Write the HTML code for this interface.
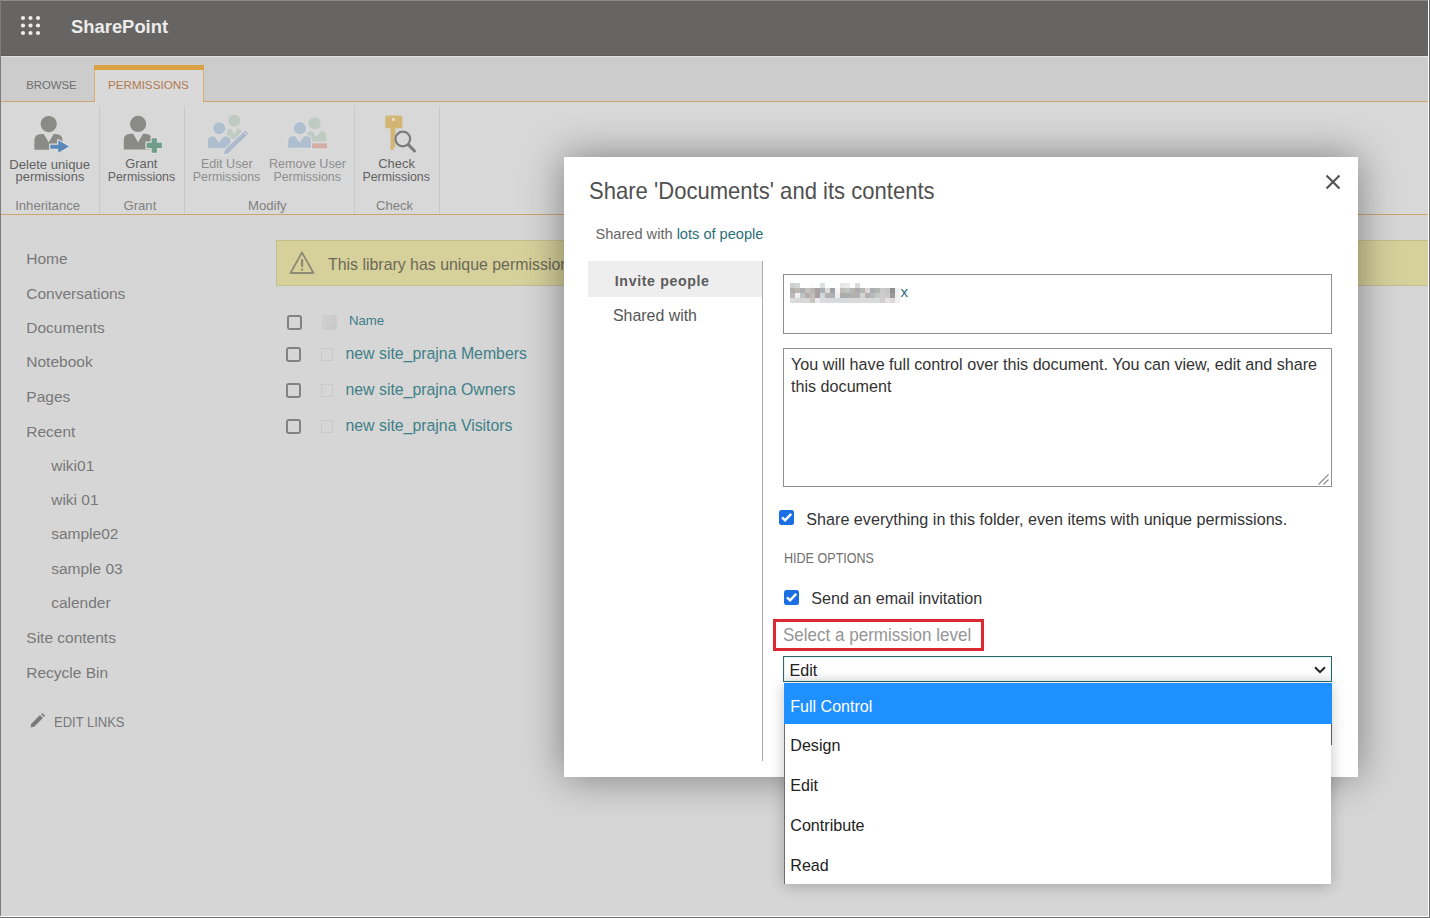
<!DOCTYPE html>
<html><head><meta charset="utf-8"><title>SharePoint</title>
<style>
html,body{margin:0;padding:0;width:1430px;height:918px;overflow:hidden;background:#d6d6d6;font-family:"Liberation Sans", sans-serif;}
.t{position:absolute;white-space:nowrap;font-family:"Liberation Sans", sans-serif;}
svg{overflow:visible}
</style></head><body>
<div style="position:absolute;left:0px;top:0px;width:1430px;height:56px;background:#666564"></div><svg style="position:absolute;left:0;top:0" width="60" height="56"><circle cx="23.0" cy="18.0" r="2.1" fill="#ededed"/><circle cx="23.0" cy="25.5" r="2.1" fill="#ededed"/><circle cx="23.0" cy="33.0" r="2.1" fill="#ededed"/><circle cx="30.5" cy="18.0" r="2.1" fill="#ededed"/><circle cx="30.5" cy="25.5" r="2.1" fill="#ededed"/><circle cx="30.5" cy="33.0" r="2.1" fill="#ededed"/><circle cx="38.0" cy="18.0" r="2.1" fill="#ededed"/><circle cx="38.0" cy="25.5" r="2.1" fill="#ededed"/><circle cx="38.0" cy="33.0" r="2.1" fill="#ededed"/></svg><div class="t" style="left:71px;top:18.22px;font-size:18.4px;line-height:18.4px;color:#ececec;font-weight:700;">SharePoint</div><div style="position:absolute;left:0px;top:55px;width:1430px;height:1px;background:#5e5d5c"></div><div style="position:absolute;left:0px;top:56px;width:1430px;height:1px;background:#e2e2e2"></div><div style="position:absolute;left:0px;top:57px;width:1430px;height:44px;background:#cccccc"></div><div style="position:absolute;left:0px;top:101px;width:1430px;height:1px;background:#cda56d"></div><div style="position:absolute;left:94px;top:65px;width:110px;height:37px;background:#d9d9d9;border-left:1px solid #dcae6a;border-right:1px solid #dcae6a;box-sizing:border-box"></div><div style="position:absolute;left:94px;top:65px;width:110px;height:5px;background:#d9a044"></div><div class="t" style="left:26.2px;top:79.89px;font-size:11.35px;line-height:11.35px;color:#6e6e6e;font-weight:400;">BROWSE</div><div class="t" style="left:108px;top:79.14px;font-size:11.65px;line-height:11.65px;color:#b27a52;font-weight:400;">PERMISSIONS</div><div style="position:absolute;left:0px;top:102px;width:1430px;height:112px;background:#d8d8d8"></div><div style="position:absolute;left:0px;top:214px;width:1430px;height:1px;background:#cda56d"></div><div style="position:absolute;left:99px;top:106px;width:1px;height:108px;background:#c9c9c9"></div><div style="position:absolute;left:184px;top:106px;width:1px;height:108px;background:#c9c9c9"></div><div style="position:absolute;left:354px;top:106px;width:1px;height:108px;background:#c9c9c9"></div><div style="position:absolute;left:439px;top:106px;width:1px;height:108px;background:#c9c9c9"></div><div class="t" style="left:-100.3px;width:300px;text-align:center;top:157.91px;font-size:13.1px;line-height:13.1px;color:#626262">Delete unique</div><div class="t" style="left:-100px;width:300px;text-align:center;top:170.58px;font-size:12.9px;line-height:12.9px;color:#626262">permissions</div><div class="t" style="left:-8.699999999999989px;width:300px;text-align:center;top:158.08px;font-size:12.9px;line-height:12.9px;color:#626262">Grant</div><div class="t" style="left:-8.599999999999994px;width:300px;text-align:center;top:171.00px;font-size:12.4px;line-height:12.4px;color:#626262">Permissions</div><div class="t" style="left:76.80000000000001px;width:300px;text-align:center;top:158.33px;font-size:12.6px;line-height:12.6px;color:#8e8e8e">Edit User</div><div class="t" style="left:76.5px;width:300px;text-align:center;top:171.00px;font-size:12.4px;line-height:12.4px;color:#8e8e8e">Permissions</div><div class="t" style="left:157.39999999999998px;width:300px;text-align:center;top:158.33px;font-size:12.6px;line-height:12.6px;color:#8e8e8e">Remove User</div><div class="t" style="left:157.2px;width:300px;text-align:center;top:171.00px;font-size:12.4px;line-height:12.4px;color:#8e8e8e">Permissions</div><div class="t" style="left:246.60000000000002px;width:300px;text-align:center;top:158.08px;font-size:12.9px;line-height:12.9px;color:#626262">Check</div><div class="t" style="left:246.2px;width:300px;text-align:center;top:171.00px;font-size:12.4px;line-height:12.4px;color:#626262">Permissions</div><div class="t" style="left:-102.4px;width:300px;text-align:center;top:198.61px;font-size:13.1px;line-height:13.1px;color:#808080">Inheritance</div><div class="t" style="left:-10.099999999999994px;width:300px;text-align:center;top:198.61px;font-size:13.1px;line-height:13.1px;color:#808080">Grant</div><div class="t" style="left:117.30000000000001px;width:300px;text-align:center;top:198.61px;font-size:13.1px;line-height:13.1px;color:#808080">Modify</div><div class="t" style="left:244.60000000000002px;width:300px;text-align:center;top:198.61px;font-size:13.1px;line-height:13.1px;color:#808080">Check</div><svg style="position:absolute;left:0;top:102px" width="440" height="112" viewBox="0 102 440 112"><circle cx="48.7" cy="124.1" r="8.1" fill="#8a8a86"/><path d="M34.400000000000006 149.7 L34.400000000000006 140.0 Q34.400000000000006 134.0 41.400000000000006 134.0 L43.7 134.0 L48.7 142.5 L53.7 134.0 L55.400000000000006 134.0 Q62.400000000000006 134.0 62.400000000000006 140.0 L62.400000000000006 149.7 Z" fill="#8a8a86"/><path d="M50.3 144.8 L58.3 144.8 L58.3 140.3 L68.8 146.6 L58.3 152.8 L58.3 148.7 L50.3 148.7 Z" fill="#dcdcdc" stroke="#dcdcdc" stroke-width="2.6" stroke-linejoin="round"/><path d="M50.3 144.8 L58.3 144.8 L58.3 140.3 L68.8 146.6 L58.3 152.8 L58.3 148.7 L50.3 148.7 Z" fill="#5b88ba"/><circle cx="138.1" cy="123.9" r="8.1" fill="#8a8a86"/><path d="M123.8 149.5 L123.8 139.8 Q123.8 133.8 130.8 133.8 L133.1 133.8 L138.1 142.3 L143.1 133.8 L144.79999999999998 133.8 Q151.79999999999998 133.8 151.79999999999998 139.8 L151.79999999999998 149.5 Z" fill="#8a8a86"/><path d="M146.7 142.8 h5 v-4.6 h5.2 v4.6 h5 v5.2 h-5 v4.7 h-5.2 v-4.7 h-5 z" fill="#dcdcdc" stroke="#dcdcdc" stroke-width="2.6"/><path d="M146.7 142.8 h5 v-4.6 h5.2 v4.6 h5 v5.2 h-5 v4.7 h-5.2 v-4.7 h-5 z" fill="#6f9e8a"/><circle cx="234.2" cy="120.8" r="6.1" fill="#bfcac2"/><path d="M226.5 139 L226.5 133.3 Q226.5 128.8 231.0 128.8 L231.15 128.8 L234.25 134.8 L237.35 128.8 L237.5 128.8 Q242 128.8 242 133.3 L242 139 Z" fill="#bfcac2"/><circle cx="219.2" cy="128.3" r="7.3" fill="#dcdcdc"/><path d="M207.7 148.2 L207.7 141.0 Q207.7 136.5 212.2 136.5 L214.54 136.5 L219.1 142.5 L223.66 136.5 L226.0 136.5 Q230.5 136.5 230.5 141.0 L230.5 148.2 Z" fill="#dcdcdc" stroke="#dcdcdc" stroke-width="2.4"/><circle cx="219.2" cy="128.3" r="6.1" fill="#b0bfcf"/><path d="M207.7 148.2 L207.7 141.0 Q207.7 136.5 212.2 136.5 L214.54 136.5 L219.1 142.5 L223.66 136.5 L226.0 136.5 Q230.5 136.5 230.5 141.0 L230.5 148.2 Z" fill="#b0bfcf"/><path d="M245.3 130.3 L248.5 133.5 L228.3 153.3 L223.8 154.3 L225 149.8 Z" fill="#dcdcdc" stroke="#dcdcdc" stroke-width="2.4"/><path d="M245.3 130.3 L248.5 133.5 L228.3 153.3 L223.8 154.3 L225 149.8 Z" fill="#aebacb"/><path d="M243.8 131.8 L247 135" stroke="#dcdcdc" stroke-width="1"/><circle cx="314.6" cy="123.3" r="6.1" fill="#bfcac2"/><path d="M306.7 141.5 L306.7 135.7 Q306.7 131.2 311.2 131.2 L312.58 131.2 L316.5 137.2 L320.42 131.2 L321.8 131.2 Q326.3 131.2 326.3 135.7 L326.3 141.5 Z" fill="#bfcac2"/><circle cx="299.9" cy="128.2" r="7.3" fill="#dcdcdc"/><path d="M288.2 147.8 L288.2 140.7 Q288.2 136.2 292.7 136.2 L295.04 136.2 L299.6 142.2 L304.16 136.2 L306.5 136.2 Q311 136.2 311 140.7 L311 147.8 Z" fill="#dcdcdc" stroke="#dcdcdc" stroke-width="2.4"/><circle cx="299.9" cy="128.2" r="6.1" fill="#b0bfcf"/><path d="M288.2 147.8 L288.2 140.7 Q288.2 136.2 292.7 136.2 L295.04 136.2 L299.6 142.2 L304.16 136.2 L306.5 136.2 Q311 136.2 311 140.7 L311 147.8 Z" fill="#b0bfcf"/><rect x="311" y="142.3" width="17.2" height="7" fill="#dcdcdc"/><rect x="312" y="143.3" width="15.2" height="5" fill="#d6ada5"/><rect x="385.3" y="115.6" width="17" height="12.6" rx="1.5" fill="#d3b574"/><circle cx="393.5" cy="119.4" r="1.6" fill="#e9dfc8"/><path d="M390.5 128 L395.3 128 L395.3 146 L393 150 L390.5 150 Z" fill="#d3b574"/><circle cx="402.8" cy="139" r="8.5" fill="#d9d9d9"/><circle cx="402.8" cy="139" r="7.3" fill="none" stroke="#7b7b7b" stroke-width="2.2"/><line x1="408.5" y1="144.7" x2="414.5" y2="151" stroke="#7b7b7b" stroke-width="3" stroke-linecap="round"/></svg><div style="position:absolute;left:0px;top:215px;width:1430px;height:703px;background:#d6d6d6"></div><div class="t" style="left:26.3px;top:250.58px;font-size:15.5px;line-height:15.5px;color:#787878;font-weight:400;">Home</div><div class="t" style="left:26.3px;top:285.78px;font-size:15.5px;line-height:15.5px;color:#787878;font-weight:400;">Conversations</div><div class="t" style="left:26.3px;top:319.68px;font-size:15.5px;line-height:15.5px;color:#787878;font-weight:400;">Documents</div><div class="t" style="left:26.3px;top:354.18px;font-size:15.5px;line-height:15.5px;color:#787878;font-weight:400;">Notebook</div><div class="t" style="left:26.3px;top:388.58px;font-size:15.5px;line-height:15.5px;color:#787878;font-weight:400;">Pages</div><div class="t" style="left:26.3px;top:423.68px;font-size:15.5px;line-height:15.5px;color:#787878;font-weight:400;">Recent</div><div class="t" style="left:51.2px;top:457.58px;font-size:15.5px;line-height:15.5px;color:#787878;font-weight:400;">wiki01</div><div class="t" style="left:51.2px;top:492.38px;font-size:15.5px;line-height:15.5px;color:#787878;font-weight:400;">wiki 01</div><div class="t" style="left:51.2px;top:526.28px;font-size:15.5px;line-height:15.5px;color:#787878;font-weight:400;">sample02</div><div class="t" style="left:51.2px;top:561.08px;font-size:15.5px;line-height:15.5px;color:#787878;font-weight:400;">sample 03</div><div class="t" style="left:51.2px;top:595.28px;font-size:15.5px;line-height:15.5px;color:#787878;font-weight:400;">calender</div><div class="t" style="left:26.3px;top:630.18px;font-size:15.5px;line-height:15.5px;color:#787878;font-weight:400;">Site contents</div><div class="t" style="left:26.3px;top:664.68px;font-size:15.5px;line-height:15.5px;color:#787878;font-weight:400;">Recycle Bin</div><div class="t" style="left:53.5px;top:713.93px;font-size:15.2px;line-height:15.2px;color:#787878;font-weight:400;transform:scaleX(0.855);transform-origin:0 0">EDIT LINKS</div><svg style="position:absolute;left:28px;top:712px" width="18" height="18" viewBox="0 0 18 18"><path d="M2.5 15.5 L3.3 11.8 L12 3.1 L14.9 6 L6.2 14.7 Z" fill="#7a7a7a"/><path d="M13 2.1 L14.2 0.9 L17.1 3.8 L15.9 5 Z" fill="#7a7a7a"/></svg><div style="position:absolute;left:276px;top:240px;width:1154px;height:46px;background:#d6d09b;border:1px solid #c4bf92;box-sizing:border-box"></div><svg style="position:absolute;left:288px;top:250px" width="28" height="26" viewBox="0 0 28 26"><path d="M14 2.5 L25.5 23 L2.5 23 Z" fill="none" stroke="#8e8c76" stroke-width="1.8" stroke-linejoin="round"/><rect x="13" y="9" width="2.2" height="8" rx="1" fill="#8e8c76"/><circle cx="14.1" cy="19.6" r="1.2" fill="#8e8c76"/></svg><div class="t" style="left:328px;top:257.14px;font-size:15.9px;line-height:15.9px;color:#6b6a58;font-weight:400;">This library has unique permissions.</div><div style="position:absolute;left:287px;top:315px;width:15px;height:15px;border:2px solid #828282;border-radius:3px;box-sizing:border-box"></div><div style="position:absolute;left:322px;top:315px;width:15px;height:15px;background:linear-gradient(135deg,#d2d2d2,#c6c6c6);border:1px solid #cdcdcd;border-radius:2px;box-sizing:border-box"></div><div class="t" style="left:349px;top:314.43px;font-size:13.2px;line-height:13.2px;color:#3d7d87;font-weight:400;">Name</div><div style="position:absolute;left:286px;top:347px;width:15px;height:15px;border:2px solid #828282;border-radius:3px;box-sizing:border-box"></div><div style="position:absolute;left:321px;top:348px;width:12px;height:13px;border:1px solid #c9c9c9;box-sizing:border-box"></div><div class="t" style="left:345.5px;top:346.08px;font-size:15.85px;line-height:15.85px;color:#3f8088;font-weight:400;">new site_prajna Members</div><div style="position:absolute;left:286px;top:383px;width:15px;height:15px;border:2px solid #828282;border-radius:3px;box-sizing:border-box"></div><div style="position:absolute;left:321px;top:384px;width:12px;height:13px;border:1px solid #c9c9c9;box-sizing:border-box"></div><div class="t" style="left:345.5px;top:382.08px;font-size:15.85px;line-height:15.85px;color:#3f8088;font-weight:400;">new site_prajna Owners</div><div style="position:absolute;left:286px;top:419px;width:15px;height:15px;border:2px solid #828282;border-radius:3px;box-sizing:border-box"></div><div style="position:absolute;left:321px;top:420px;width:12px;height:13px;border:1px solid #c9c9c9;box-sizing:border-box"></div><div class="t" style="left:345.5px;top:418.08px;font-size:15.85px;line-height:15.85px;color:#3f8088;font-weight:400;">new site_prajna Visitors</div><div style="position:absolute;left:564px;top:157px;width:794px;height:620px;background:#fff;box-shadow:0 0 38px rgba(0,0,0,0.42)"></div><div class="t" style="left:588.5px;top:179.62px;font-size:23.6px;line-height:23.6px;color:#505050;font-weight:300;transform:scaleX(0.935);transform-origin:0 0">Share 'Documents' and its contents</div><svg style="position:absolute;left:1324px;top:173px" width="18" height="18" viewBox="0 0 18 18"><path d="M2.5 2.5 L15.5 15.5 M15.5 2.5 L2.5 15.5" stroke="#555" stroke-width="2.2"/></svg><div class="t" style="left:595.5px;top:227.14px;font-size:14.6px;line-height:14.6px;color:#666;font-weight:400;">Shared with <span style="color:#2a6f7a">lots of people</span></div><div style="position:absolute;left:588px;top:261px;width:174px;height:36px;background:#eeeeee"></div><div style="position:absolute;left:762px;top:261px;width:1px;height:500px;background:#ababab"></div><div class="t" style="left:614.8px;top:273.68px;font-size:14.2px;line-height:14.2px;color:#5c5c5c;font-weight:700;letter-spacing:0.62px;">Invite people</div><div class="t" style="left:613px;top:308.04px;font-size:15.9px;line-height:15.9px;color:#555;font-weight:400;">Shared with</div><div style="position:absolute;left:783px;top:274px;width:549px;height:60px;border:1px solid #8e8e8e;box-sizing:border-box;background:#fff"></div><svg style="position:absolute;left:790px;top:283px" width="110" height="20" shape-rendering="crispEdges"><rect x="0" y="0" width="5" height="5" fill="#d0cfcf"/><rect x="5" y="0" width="5" height="5" fill="#d5d8d8"/><rect x="20" y="0" width="5" height="5" fill="#fbfbf9"/><rect x="30" y="0" width="5" height="5" fill="#dde0e2"/><rect x="50" y="0" width="5" height="5" fill="#e6e6e2"/><rect x="55" y="0" width="5" height="5" fill="#e8ecee"/><rect x="65" y="0" width="5" height="5" fill="#d8d8d8"/><rect x="0" y="5" width="5" height="5" fill="#b5b0b0"/><rect x="5" y="5" width="5" height="5" fill="#bab8b5"/><rect x="10" y="5" width="5" height="5" fill="#b0aeae"/><rect x="15" y="5" width="5" height="5" fill="#c5c2c0"/><rect x="20" y="5" width="5" height="5" fill="#b8b5b5"/><rect x="25" y="5" width="5" height="5" fill="#a8a2a0"/><rect x="30" y="5" width="5" height="5" fill="#aab0b5"/><rect x="35" y="5" width="5" height="5" fill="#dcdcd8"/><rect x="40" y="5" width="5" height="5" fill="#9ea2a8"/><rect x="45" y="5" width="5" height="5" fill="#f5f5f5"/><rect x="50" y="5" width="5" height="5" fill="#bcbcb8"/><rect x="55" y="5" width="5" height="5" fill="#c0c4c5"/><rect x="60" y="5" width="5" height="5" fill="#b8b5b3"/><rect x="65" y="5" width="5" height="5" fill="#acacae"/><rect x="70" y="5" width="5" height="5" fill="#b5b5b5"/><rect x="75" y="5" width="5" height="5" fill="#d8d5d2"/><rect x="80" y="5" width="5" height="5" fill="#a8aeb2"/><rect x="85" y="5" width="5" height="5" fill="#b5b5b0"/><rect x="90" y="5" width="5" height="5" fill="#c8cacc"/><rect x="95" y="5" width="5" height="5" fill="#c5c5c5"/><rect x="100" y="5" width="5" height="5" fill="#8f8f8f"/><rect x="105" y="5" width="5" height="5" fill="#eef0f2"/><rect x="0" y="10" width="5" height="5" fill="#c0b8b8"/><rect x="5" y="10" width="5" height="5" fill="#eef0f2"/><rect x="10" y="10" width="5" height="5" fill="#c0c4c5"/><rect x="15" y="10" width="5" height="5" fill="#b5aeaa"/><rect x="20" y="10" width="5" height="5" fill="#c0bcbc"/><rect x="25" y="10" width="5" height="5" fill="#a8a0a0"/><rect x="30" y="10" width="5" height="5" fill="#d0dadd"/><rect x="35" y="10" width="5" height="5" fill="#b5b2ad"/><rect x="40" y="10" width="5" height="5" fill="#aeb2b8"/><rect x="45" y="10" width="5" height="5" fill="#eeeeea"/><rect x="50" y="10" width="5" height="5" fill="#acacac"/><rect x="55" y="10" width="5" height="5" fill="#acacac"/><rect x="60" y="10" width="5" height="5" fill="#b5b2b0"/><rect x="65" y="10" width="5" height="5" fill="#b2b0b2"/><rect x="70" y="10" width="5" height="5" fill="#d5d5d0"/><rect x="75" y="10" width="5" height="5" fill="#b8b0ae"/><rect x="80" y="10" width="5" height="5" fill="#b5babd"/><rect x="85" y="10" width="5" height="5" fill="#c8c8c8"/><rect x="90" y="10" width="5" height="5" fill="#cfcccc"/><rect x="95" y="10" width="5" height="5" fill="#cccaca"/><rect x="100" y="10" width="5" height="5" fill="#9a9a9a"/><rect x="105" y="10" width="5" height="5" fill="#eef0f2"/><rect x="0" y="15" width="5" height="5" fill="#dcdcdc"/><rect x="5" y="15" width="5" height="5" fill="#d8d8d8"/><rect x="10" y="15" width="5" height="5" fill="#d8d8d8"/><rect x="15" y="15" width="5" height="5" fill="#d8d8d8"/><rect x="20" y="15" width="5" height="5" fill="#c8c4c4"/><rect x="25" y="15" width="5" height="5" fill="#e8eaec"/><rect x="30" y="15" width="5" height="5" fill="#d8dadb"/><rect x="35" y="15" width="5" height="5" fill="#d8dadb"/><rect x="40" y="15" width="5" height="5" fill="#d8dadb"/><rect x="45" y="15" width="5" height="5" fill="#d8dadb"/><rect x="50" y="15" width="5" height="5" fill="#d8dadb"/><rect x="55" y="15" width="5" height="5" fill="#d8dadb"/><rect x="60" y="15" width="5" height="5" fill="#d8dadb"/><rect x="65" y="15" width="5" height="5" fill="#d8dadb"/><rect x="70" y="15" width="5" height="5" fill="#d8dadb"/><rect x="75" y="15" width="5" height="5" fill="#d8dadb"/><rect x="80" y="15" width="5" height="5" fill="#d8dadb"/><rect x="85" y="15" width="5" height="5" fill="#d8dadb"/><rect x="90" y="15" width="5" height="5" fill="#d0cece"/><rect x="95" y="15" width="5" height="5" fill="#e4e4e4"/><rect x="100" y="15" width="5" height="5" fill="#dadada"/><rect x="105" y="15" width="5" height="5" fill="#f0f0f0"/></svg><div class="t" style="left:900.5px;top:284.30px;font-size:15px;line-height:15px;color:#2a6f7a;font-weight:400;">x</div><div style="position:absolute;left:783px;top:348px;width:549px;height:139px;border:1px solid #8e8e8e;box-sizing:border-box;background:#fff"></div><div class="t" style="left:791px;top:356.13px;font-size:16.15px;line-height:16.15px;color:#333;font-weight:400;">You will have full control over this document. You can view, edit and share</div><div class="t" style="left:791px;top:378.23px;font-size:16.15px;line-height:16.15px;color:#333;font-weight:400;">this document</div><svg style="position:absolute;left:1316px;top:472px" width="14" height="14" viewBox="0 0 14 14"><path d="M12.5 2.5 L2.5 12.5 M12.5 7.5 L7.5 12.5" stroke="#8a8a8a" stroke-width="1.1"/></svg><div style="position:absolute;left:779px;top:510px;width:15px;height:15px;background:#1b6fe4;border-radius:2.5px"></div><svg style="position:absolute;left:779px;top:510px" width="15" height="15" viewBox="0 0 15 15"><path d="M3 7.3 L6.1 10.4 L12.2 3.9" fill="none" stroke="#fff" stroke-width="2.4"/></svg><div class="t" style="left:806.3px;top:510.63px;font-size:16.15px;line-height:16.15px;color:#333;font-weight:400;">Share everything in this folder, even items with unique permissions.</div><div class="t" style="left:783.5px;top:551.28px;font-size:14.2px;line-height:14.2px;color:#707070;font-weight:400;transform:scaleX(0.885);transform-origin:0 0">HIDE OPTIONS</div><div style="position:absolute;left:784px;top:590px;width:15px;height:15px;background:#1b6fe4;border-radius:2.5px"></div><svg style="position:absolute;left:784px;top:590px" width="15" height="15" viewBox="0 0 15 15"><path d="M3 7.3 L6.1 10.4 L12.2 3.9" fill="none" stroke="#fff" stroke-width="2.4"/></svg><div class="t" style="left:811.3px;top:590.37px;font-size:16.1px;line-height:16.1px;color:#333;font-weight:400;">Send an email invitation</div><div style="position:absolute;left:773px;top:619px;width:211px;height:32px;border:3px solid #dc2832;box-sizing:border-box"></div><div class="t" style="left:783.2px;top:626.04px;font-size:18.5px;line-height:18.5px;color:#959595;font-weight:300;transform:scaleX(0.92);transform-origin:0 0">Select a permission level</div><div style="position:absolute;left:783px;top:656px;width:549px;height:26px;border:1px solid #2f6569;box-sizing:border-box;background:linear-gradient(#ffffff 60%,#f4f4f4);box-shadow:inset 0 0 0 1px #e4f6f6"></div><div class="t" style="left:789.5px;top:662.07px;font-size:16.1px;line-height:16.1px;color:#222;font-weight:400;">Edit</div><svg style="position:absolute;left:1313px;top:664px" width="14" height="12" viewBox="0 0 14 12"><path d="M2 3.2 L7 8.2 L12 3.2" fill="none" stroke="#222" stroke-width="2"/></svg><div style="position:absolute;left:1300px;top:706px;width:32px;height:39px;border:1px solid #6a6a6a;box-sizing:border-box;background:#fff"></div><div style="position:absolute;left:784px;top:683px;width:547px;height:201px;background:#fff;border-left:1px solid #6f6f6f;box-sizing:border-box;box-shadow:0 2px 14px rgba(0,0,0,0.24)"></div><div style="position:absolute;left:784px;top:683px;width:548px;height:41px;background:#1e90ff"></div><div class="t" style="left:790.3px;top:697.51px;font-size:16.05px;line-height:16.05px;color:#ffffff;font-weight:400;">Full Control</div><div class="t" style="left:790.3px;top:737.37px;font-size:16.1px;line-height:16.1px;color:#222;font-weight:400;">Design</div><div class="t" style="left:790.3px;top:777.37px;font-size:16.1px;line-height:16.1px;color:#222;font-weight:400;">Edit</div><div class="t" style="left:790.3px;top:817.37px;font-size:16.1px;line-height:16.1px;color:#222;font-weight:400;">Contribute</div><div class="t" style="left:790.3px;top:857.37px;font-size:16.1px;line-height:16.1px;color:#222;font-weight:400;">Read</div><div style="position:absolute;left:0px;top:0px;width:1430px;height:1px;background:#8b8b8b"></div><div style="position:absolute;left:0px;top:0px;width:1px;height:918px;background:#7c7c7c"></div><div style="position:absolute;left:1428px;top:0px;width:1px;height:917px;background:#ffffff"></div><div style="position:absolute;left:0px;top:916px;width:1429px;height:1px;background:#ffffff"></div><div style="position:absolute;left:1429px;top:0px;width:1px;height:918px;background:#6a6a6a"></div><div style="position:absolute;left:0px;top:917px;width:1430px;height:1px;background:#6a6a6a"></div>
</body></html>
